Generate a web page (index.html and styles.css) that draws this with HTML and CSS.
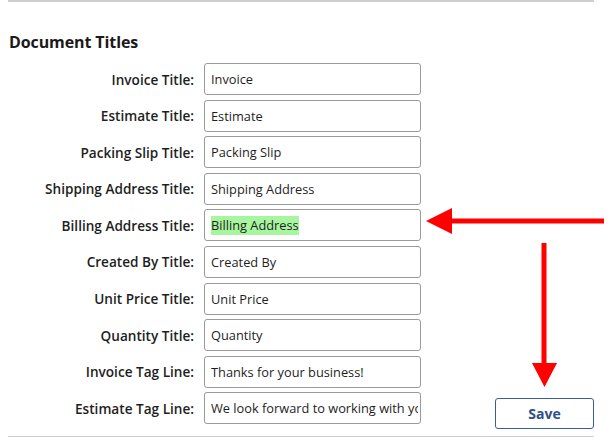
FILE: index.html
```html
<!DOCTYPE html>
<html>
<head>
<meta charset="utf-8">
<link rel="stylesheet" href="styles.css">
</head>
<body>
<div class="page">
  <h2 class="title">Document Titles</h2>
  <div class="form-row">
    <div class="grid">
      <label class="lbl">Invoice Title:</label><input class="field" readonly value="Invoice">
      <label class="lbl">Estimate Title:</label><input class="field" readonly value="Estimate">
      <label class="lbl">Packing Slip Title:</label><input class="field" readonly value="Packing Slip">
      <label class="lbl">Shipping Address Title:</label><input class="field" readonly value="Shipping Address">
      <label class="lbl">Billing Address Title:</label><div class="field"><span class="sel">Billing Address</span></div>
      <label class="lbl">Created By Title:</label><input class="field" readonly value="Created By">
      <label class="lbl">Unit Price Title:</label><input class="field" readonly value="Unit Price">
      <label class="lbl">Quantity Title:</label><input class="field" readonly value="Quantity">
      <label class="lbl">Invoice Tag Line:</label><input class="field" readonly value="Thanks for your business!">
      <label class="lbl">Estimate Tag Line:</label><input class="field" readonly value="We look forward to working with you">
    </div>
    <div class="actions">
      <button class="save">Save</button>
    </div>
  </div>
  <svg class="arrows" width="611" height="437" viewBox="0 0 611 437">
    <rect x="449" y="218.5" width="155" height="5" fill="#ff0000"/>
    <polygon points="426,221 452,208 452,234" fill="#ff0000"/>
    <rect x="541.5" y="243" width="5" height="123" fill="#ff0000"/>
    <polygon points="532,363 557,363 544.5,387" fill="#ff0000"/>
  </svg>
</div>
</body>
</html>
```
FILE: styles.css
```css
html, body {
  margin: 0;
  padding: 0;
  background: #fff;
}
body {
  font-family: "Open Sans", "Liberation Sans", sans-serif;
  color: #222;
}
.page {
  position: relative;
  width: 611px;
  height: 437px;
  box-sizing: border-box;
  padding: 0 17px 0 8px;
  overflow: hidden;
}
.page::before {
  content: "";
  display: block;
  height: 2px;
  background: #cfcfcf;
}
.title {
  margin: 29px 0 0 1px;
  font-size: 16px;
  font-weight: 700;
  line-height: 22px;
  color: #1a1a1a;
  letter-spacing: -0.1px;
}
.form-row {
  display: flex;
  margin-top: 10px;
  border-bottom: 2px solid #cfcfcf;
}
.grid {
  display: grid;
  grid-template-columns: 186px 217px;
  column-gap: 10px;
  row-gap: 4.6px;
  padding-bottom: 11.5px;
}
.lbl {
  display: flex;
  align-items: center;
  justify-content: flex-end;
  font-size: 13.6px;
  font-weight: 600;
  color: #1e1e1e;
  white-space: nowrap;
}
.field {
  box-sizing: border-box;
  width: 217px;
  height: 32px;
  margin: 0;
  border: 1px solid #9a9a9a;
  border-radius: 3px;
  padding: 0 2px 0 6px;
  display: flex;
  align-items: center;
  font-family: "Open Sans", "Liberation Sans", sans-serif;
  font-size: 12.8px;
  color: #1e1e1e;
  background: #fff;
  white-space: nowrap;
  overflow: hidden;
  outline: none;
}
.sel {
  background: #a8f5a0;
  line-height: 19px;
}
.actions {
  flex: 1;
  display: flex;
  justify-content: flex-end;
  align-items: flex-end;
  padding-bottom: 7px;
}
.save {
  width: 99px;
  height: 31px;
  border: 1px solid #3a5f98;
  border-radius: 3px;
  background: #fff;
  font-family: "Open Sans", "Liberation Sans", sans-serif;
  font-size: 14px;
  font-weight: 700;
  color: #2f4f86;
  padding: 0;
}
.arrows {
  position: absolute;
  left: 0;
  top: 0;
  pointer-events: none;
}
```
